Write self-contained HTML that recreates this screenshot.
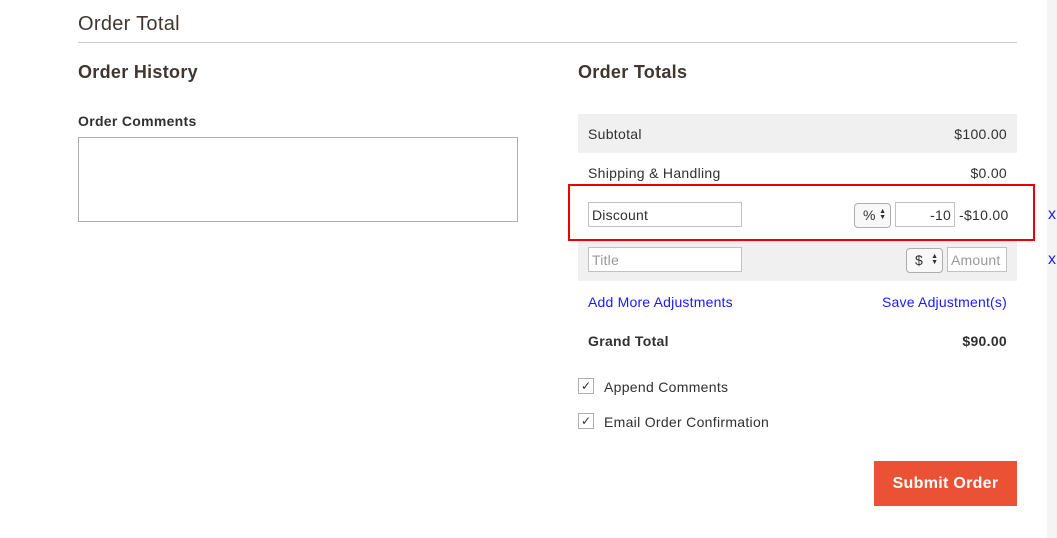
<!DOCTYPE html>
<html><head><style>
*{box-sizing:border-box}
body{margin:0;width:1057px;height:538px;background:#fff;font-family:"Liberation Sans",sans-serif;color:#303030;position:relative;overflow:hidden}
.a{position:absolute}
.strip{left:1047px;top:0;width:10px;height:538px;background:#f4f4f4}
.box{position:absolute;border:1px solid #c2c2c2;background:#fff;font-size:14px;padding:0 3px;height:25px;line-height:24px;color:#303030;letter-spacing:0.2px}
.sel{position:absolute;border:1px solid #adadad;border-radius:4px;background:#f8f8f8;height:25px;font-size:14px;line-height:23px;padding-left:8px;color:#303030}
.arr{position:absolute;right:4px;top:5px;font-size:7px;line-height:6px}
.link{color:#1a1aff;font-size:14px;letter-spacing:0.2px}
.t{font-size:14px;letter-spacing:0.3px}
</style></head><body>
<div class="a strip"></div>
<div class="a" style="left:78px;top:13px;font-size:20px;color:#41362f;letter-spacing:0.3px">Order Total</div>
<div class="a" style="left:78px;top:42px;width:939px;height:1px;background:#ccc"></div>
<div class="a" style="left:78px;top:62px;font-size:18px;font-weight:bold;color:#41362f;letter-spacing:0.3px">Order History</div>
<div class="a" style="left:578px;top:62px;font-size:18px;font-weight:bold;color:#41362f;letter-spacing:0.3px">Order Totals</div>
<div class="a t" style="left:78px;top:113px;font-weight:bold">Order Comments</div>
<div class="a" style="left:78px;top:137px;width:440px;height:85px;border:1px solid #adadad"></div>

<div class="a" style="left:578px;top:114px;width:439px;height:39px;background:#f0f0f0"></div>
<div class="a t" style="left:588px;top:126px">Subtotal</div>
<div class="a t" style="right:50px;top:126px">$100.00</div>
<div class="a t" style="left:588px;top:165px">Shipping &amp; Handling</div>
<div class="a t" style="right:50px;top:165px">$0.00</div>

<div class="box" style="left:588px;top:202px;width:154px">Discount</div>
<div class="sel" style="left:854px;top:203px;width:37px">%<span class="arr">▲<br>▼</span></div>
<div class="box" style="left:895px;top:202px;width:60px;text-align:right">-10</div>
<div class="a t" style="left:959px;top:207px">-$10.00</div>
<div class="a link" style="left:1048px;top:206px;font-size:16px">x</div>
<div class="a" style="left:568px;top:184px;width:467px;height:57px;border:2px solid #e00"></div>

<div class="a" style="left:578px;top:241px;width:439px;height:40px;background:#f0f0f0"></div>
<div class="box" style="left:588px;top:247px;width:154px;color:#999">Title</div>
<div class="sel" style="left:906px;top:248px;width:37px">$<span class="arr">▲<br>▼</span></div>
<div class="box" style="left:947px;top:247px;width:60px;color:#999">Amount</div>
<div class="a link" style="left:1048px;top:251px;font-size:16px">x</div>

<div class="a link" style="left:588px;top:294px">Add More Adjustments</div>
<div class="a link" style="right:50px;top:294px">Save Adjustment(s)</div>
<div class="a t" style="left:588px;top:333px;font-weight:bold">Grand Total</div>
<div class="a t" style="right:50px;top:333px;font-weight:bold">$90.00</div>

<div class="a" style="left:578px;top:378px;width:16px;height:16px;border:1px solid #adadad;font-size:12px;line-height:14px;text-align:center">&#10003;</div>
<div class="a t" style="left:604px;top:379px">Append Comments</div>
<div class="a" style="left:578px;top:413px;width:16px;height:16px;border:1px solid #adadad;font-size:12px;line-height:14px;text-align:center">&#10003;</div>
<div class="a t" style="left:604px;top:414px">Email Order Confirmation</div>

<div class="a" style="left:874px;top:461px;width:143px;height:45px;background:#eb5235;color:#fff;font-size:16px;font-weight:bold;text-align:center;line-height:45px;letter-spacing:0.3px">Submit Order</div>
</body></html>
